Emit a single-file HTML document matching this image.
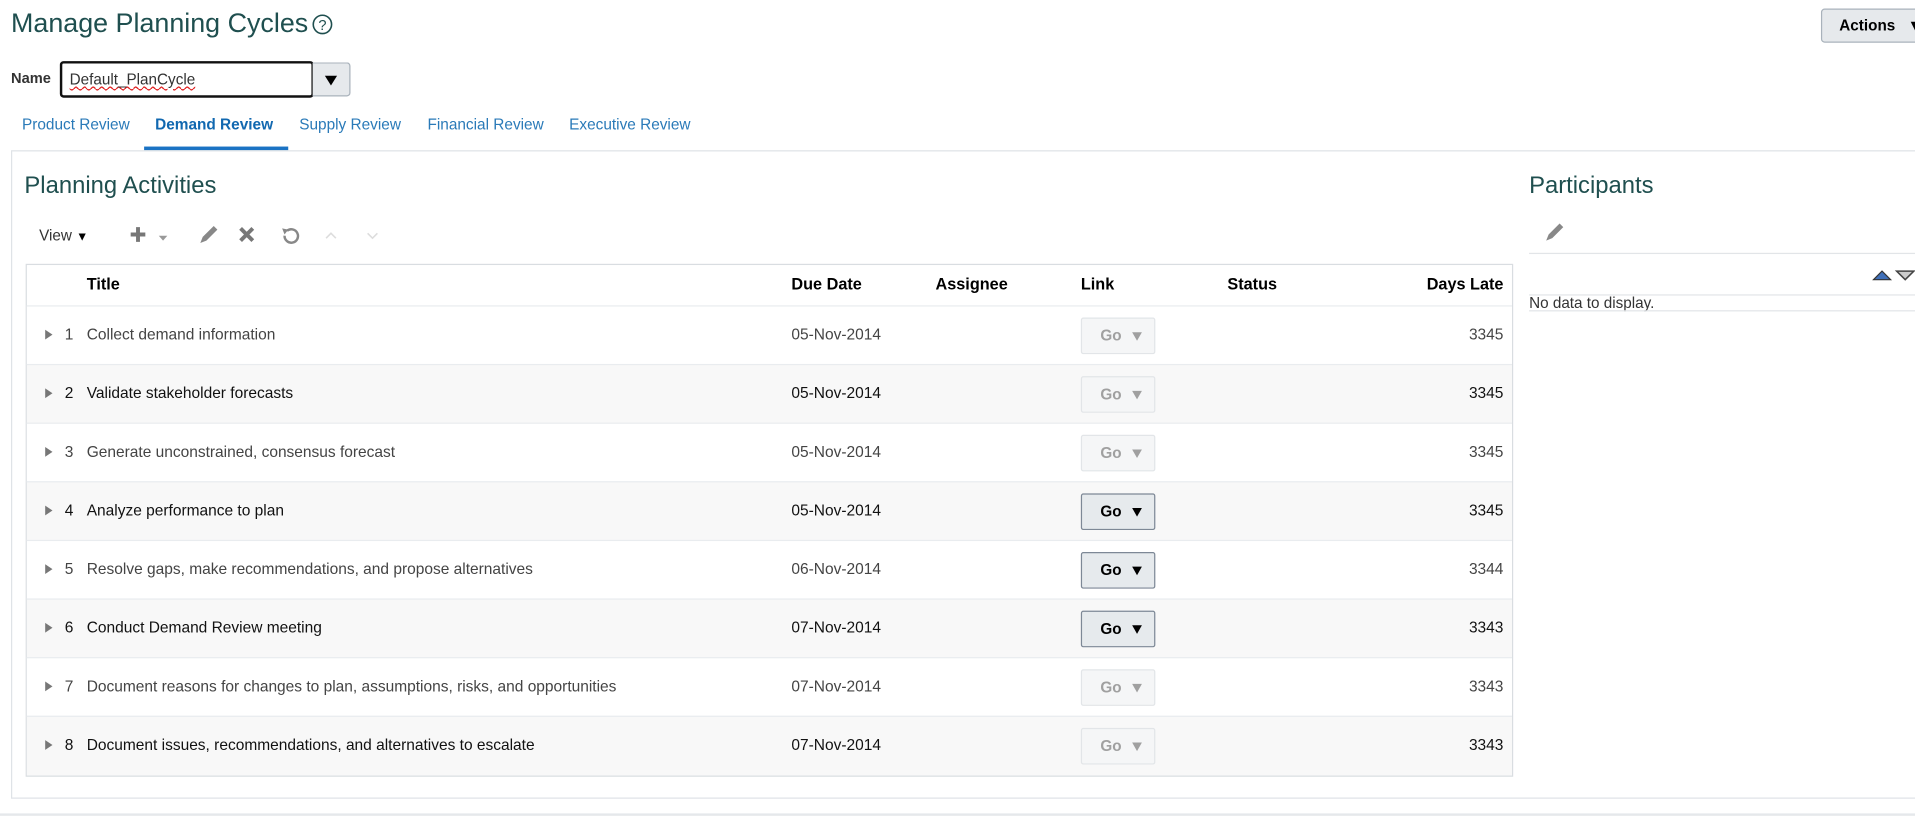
<!DOCTYPE html>
<html><head><meta charset="utf-8"><style>
html,body{margin:0;padding:0;background:#fff;overflow:hidden;width:1915px;height:835px}
#w{position:absolute;left:0;top:0;width:1568px;height:684px;transform:scale(1.22130);transform-origin:0 0;font-family:"Liberation Sans",sans-serif;color:#333}
.a{position:absolute;white-space:nowrap}
.tab{position:absolute;top:95px;font-size:12.6px;color:#2a7ab8}
.h{position:absolute;font-weight:bold;font-size:13.3px;color:#000;top:225px}
.row{position:absolute;left:22px;width:1216px;height:48px;border-top:1px solid #e9ecef;font-size:12.7px}
.row span{position:absolute;top:16px}
.go{position:absolute;left:863px;top:9px;width:61px;height:30px;box-sizing:border-box;border:1px solid #e2e5e8;background:#f5f6f7;border-radius:2px;color:#a0a0a0;font-weight:bold;font-size:12.5px}
.go.on{border-color:#7d8896;background:#e6eaed;color:#000}
.go b{position:absolute;left:15px;top:7px}
.go i{position:absolute;left:41px;top:11px;width:0;height:0;border-left:4.5px solid transparent;border-right:4.5px solid transparent;border-top:7px solid #a0a0a0}
.go.on i{border-top-color:#000}
</style></head><body><div id="w">
<div class="a" style="left:9px;top:6px;font-size:22px;color:#1f4f4f">Manage Planning Cycles</div>
<svg class="a" style="left:255px;top:11px" width="18" height="18"><circle cx="9" cy="9" r="7.5" fill="none" stroke="#1f4f4f" stroke-width="1.3"/><text x="9" y="13.5" font-size="12" text-anchor="middle" fill="#1f4f4f" font-family="Liberation Sans">?</text></svg>
<div class="a" style="left:1491px;top:7px;width:90px;height:28px;box-sizing:border-box;border:1px solid #a9b2bb;border-radius:3px;background:#e6e9ec;font-weight:bold;font-size:12.5px;color:#000"><span style="position:absolute;left:14px;top:6px">Actions</span><span style="position:absolute;left:70px;top:6px">▼</span></div>
<div class="a" style="left:9px;top:57px;font-size:12px;font-weight:bold;color:#333">Name</div>
<div class="a" style="left:49px;top:50px;width:208px;height:30px;box-sizing:border-box;border:2px solid #111;border-radius:3px;background:#fff;font-size:12.5px;color:#333"><span style="position:absolute;left:6px;top:6px;text-decoration:underline wavy #e02020 1px">Default_PlanCycle</span></div>
<div class="a" style="left:256px;top:51px;width:31px;height:28px;box-sizing:border-box;border:1px solid #a9b2bb;border-left:none;border-radius:0 3px 3px 0;background:#e6e9ec"><i style="position:absolute;left:10px;top:10px;border-left:5px solid transparent;border-right:5px solid transparent;border-top:8px solid #000"></i></div>
<div class="tab" style="left:18px">Product Review</div>
<div class="tab" style="left:127px;font-weight:bold;color:#1168b0">Demand Review</div>
<div class="a" style="left:118px;top:120px;width:118px;height:3px;background:#1a73c4"></div>
<div class="tab" style="left:245px">Supply Review</div>
<div class="tab" style="left:350px">Financial Review</div>
<div class="tab" style="left:466px">Executive Review</div>
<div class="a" style="left:9px;top:123px;width:1570px;height:531px;box-sizing:border-box;border:1px solid #dfe3e7"></div>
<div class="a" style="left:20px;top:141px;font-size:19.5px;color:#1f4f4f">Planning Activities</div>
<div class="a" style="left:32px;top:186px;font-size:12.5px;color:#333">View <span style="font-size:10px;color:#000">▼</span></div>
<svg class="a" style="left:104px;top:183px" width="220" height="20">
<path d="M3 9h12M9 3v12" stroke="#777" stroke-width="3.2"/><path d="M26 10l3.5 4 3.5-4z" fill="#999"/>
<path d="M60 16l2-5 9-9 3 3-9 9z M60 16l4-1" fill="#888"/>
<path d="M93 4l10 10M103 4l-10 10" stroke="#777" stroke-width="3.2"/>
<path d="M131 6a5.5 5.5 0 1 1-2 4" fill="none" stroke="#888" stroke-width="2"/><path d="M127 4l5 1-3 4z" fill="#888"/>
<path d="M163 12l4-4 4 4" fill="none" stroke="#ddd" stroke-width="1.3"/><path d="M197 8l4 4 4-4" fill="none" stroke="#ddd" stroke-width="1.3"/>
</svg>
<div class="a" style="left:21px;top:216px;width:1218px;height:420px;box-sizing:border-box;border:1px solid #d9dde1"></div>
<div class="h" style="left:71px">Title</div>
<div class="h" style="left:648px">Due Date</div>
<div class="h" style="left:766px">Assignee</div>
<div class="h" style="left:885px">Link</div>
<div class="h" style="left:1005px">Status</div>
<div class="h" style="right:337px">Days Late</div>
<div id="rows"></div>
<div class="a" style="left:1252px;top:141px;font-size:19.5px;color:#1f4f4f">Participants</div>
<svg class="a" style="left:1264px;top:180px" width="20" height="20"><path d="M2 17l2-5 9-9 3 3-9 9z M2 17l4-1" fill="#888"/></svg>
<div class="a" style="left:1252px;top:207px;width:320px;height:1px;background:#e2e5e8"></div>
<svg class="a" style="left:1533px;top:219px" width="36" height="12"><path d="M1 10l7-7 7 7z" fill="#3f6fb8" stroke="#333" stroke-width="1"/><path d="M20 3h14l-7 7z" fill="#ccc" stroke="#444" stroke-width="1.3"/></svg>
<div class="a" style="left:1252px;top:241px;width:320px;height:1px;background:#e2e5e8"></div>
<div class="a" style="left:1252px;top:241px;font-size:12.5px;color:#333">No data to display.</div>
<div class="a" style="left:1252px;top:254px;width:320px;height:1px;background:#e2e5e8"></div>
<div class="a" style="left:0;top:666px;width:1568px;height:2px;background:#e5e8eb"></div>
</div>
<script>
var d=[["Collect demand information","05-Nov-2014",0,3345],["Validate stakeholder forecasts","05-Nov-2014",0,3345],["Generate unconstrained, consensus forecast","05-Nov-2014",0,3345],["Analyze performance to plan","05-Nov-2014",1,3345],["Resolve gaps, make recommendations, and propose alternatives","06-Nov-2014",1,3344],["Conduct Demand Review meeting","07-Nov-2014",1,3343],["Document reasons for changes to plan, assumptions, risks, and opportunities","07-Nov-2014",0,3343],["Document issues, recommendations, and alternatives to escalate","07-Nov-2014",0,3343]];
var h="";d.forEach(function(r,i){var odd=i%2==1;var c=odd?"#111":"#444";
h+='<div class="row" style="top:'+(250+i*48)+'px;background:'+(odd?'#f8f8f8':'#fff')+';color:'+c+'"><i style="position:absolute;left:15px;top:19px;border-top:4.5px solid transparent;border-bottom:4.5px solid transparent;border-left:6px solid #777"></i><span style="left:31px">'+(i+1)+'</span><span style="left:49px">'+r[0]+'</span><span style="left:626px">'+r[1]+'</span><div class="go'+(r[2]?' on':'')+'"><b>Go</b><i></i></div><span style="right:7px">'+r[3]+'</span></div>';});
document.getElementById("rows").innerHTML=h;
</script>
</body></html>
